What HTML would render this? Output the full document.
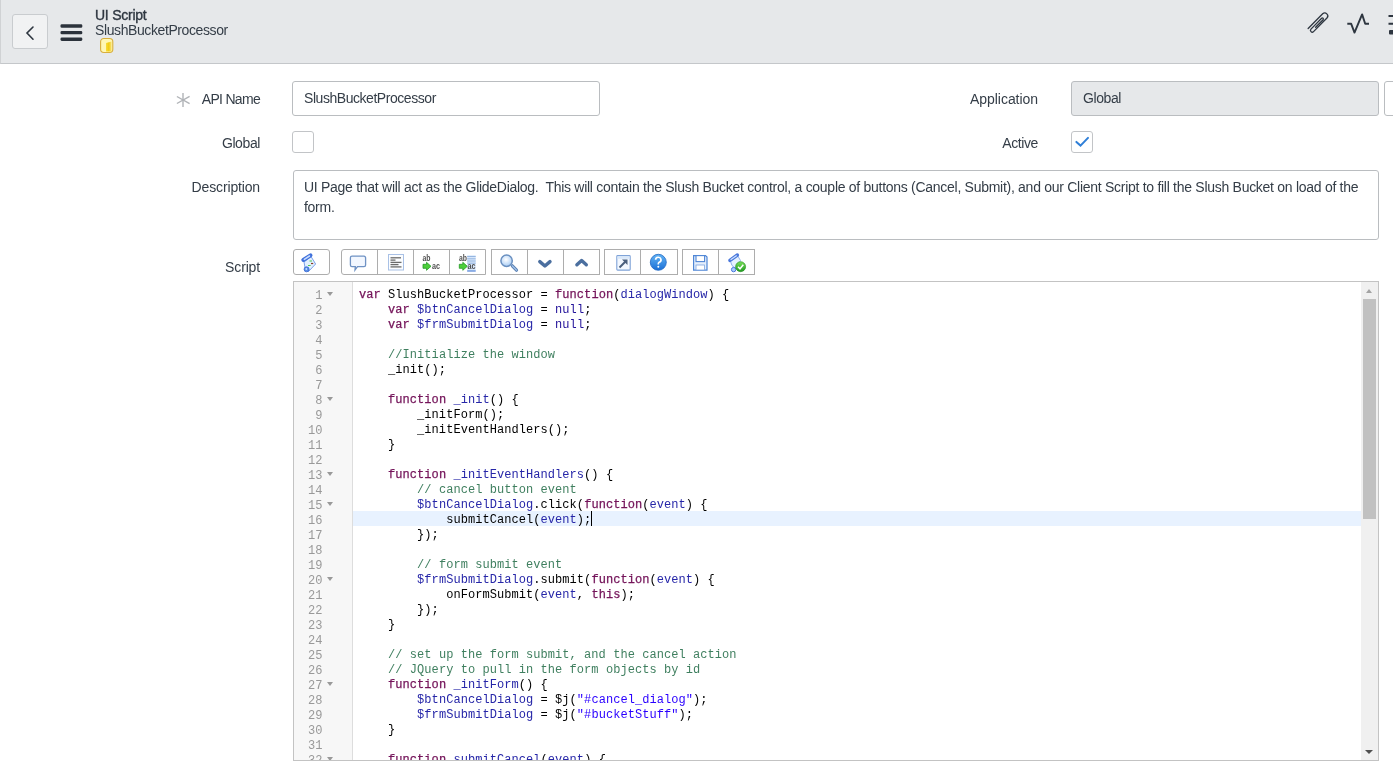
<!DOCTYPE html>
<html><head><meta charset="utf-8">
<style>
*{box-sizing:border-box;margin:0;padding:0}
html,body{width:1393px;height:768px;overflow:hidden;background:#fff;-webkit-font-smoothing:antialiased;font-family:"Liberation Sans",sans-serif;color:#343d47}
.abs{position:absolute}
#hdr{left:0;top:0;width:1393px;height:64px;background:#e6e8ea;border-bottom:1px solid #c4c7ca;border-left:1px solid #d0d2d4}
#back{left:12px;top:14px;width:36px;height:35px;background:#f1f2f3;border:1px solid #c9cccf;border-radius:3px}
.lbl{font-size:13px;color:#343d47;text-align:right;white-space:nowrap}
.inp{border:1px solid #babdc0;border-radius:3px;background:#fff;font-size:13px;color:#343d47}
.cb{border:1px solid #c2c4c7;border-radius:3px;background:#fff}
#tb .g{position:absolute;top:249px;height:26px;border:1px solid #adadad;background:#fff;display:flex}
#tb .g.r{border-radius:3px}
#tb .b{width:36px;height:24px;border-right:1px solid #adadad;position:relative}
#tb .b:last-child{border-right:none;width:auto;flex:1}
#ed{left:293px;top:281px;width:1086px;height:480px;border:1px solid #c3c3c3;background:#fff;overflow:hidden}
#gut{left:0;top:0;width:59px;height:478px;background:#f7f7f7;border-right:1px solid #dddddd}
.code{font-family:"Liberation Mono",monospace;font-size:12px;line-height:15px;white-space:pre}
#nums{left:0;top:7px;width:28.5px;text-align:right;color:#999}
#lines{left:65px;top:6px;color:#000;letter-spacing:0.06px}
.k{color:#74145a;font-weight:normal;-webkit-text-stroke:0.25px #74145a}
.v{color:#2626a8}
.c{color:#3f7f5f}
.s{color:#2a00ff}
.a{color:#221199}
#hl{left:59px;top:229px;width:1008px;height:15px;background:#e8f2ff}
#cur{left:297px;top:229px;width:1px;height:15px;background:#000}
#sb{left:1067px;top:0;width:17px;height:478px;background:#f0f0f0}
#thumb{left:2px;top:17px;width:13px;height:220px;background:#c1c1c1}
#sbup{left:5px;top:7px;width:0;height:0;border-left:3.5px solid transparent;border-right:3.5px solid transparent;border-bottom:4px solid #a3a3a3}
#sbdn{left:4px;top:468px;width:0;height:0;border-left:4px solid transparent;border-right:4px solid transparent;border-top:4px solid #505050}
.d{color:#2626a8}
.fold{left:33px;width:0;height:0;border-left:3px solid transparent;border-right:3px solid transparent;border-top:4px solid #999}
</style></head><body><div style="will-change:transform;position:absolute;left:0;top:0;width:1393px;height:768px">
<div id="hdr" class="abs"></div>
<div id="back" class="abs"><svg width="34" height="33" style="position:absolute;left:0;top:0"><path d="M20 12 L14 18 L20 24.2" fill="none" stroke="#2e3640" stroke-width="1.6" stroke-linecap="round"/></svg></div>
<svg class="abs" style="left:0;top:0" width="90" height="50"><g fill="#2b323b"><rect x="60.5" y="24.3" width="21.8" height="3.5" rx="1.3"/><rect x="60.5" y="30.9" width="21.8" height="3.4" rx="1.3"/><rect x="60.5" y="37.5" width="21.8" height="3.4" rx="1.3"/></g></svg>
<div class="abs" style="left:95px;top:7px;font-size:14px;color:#2e3640;letter-spacing:-0.25px;-webkit-text-stroke:0.35px #2e3640">UI Script</div>
<div class="abs" style="left:95px;top:22px;font-size:14px;letter-spacing:-0.4px;color:#343d47">SlushBucketProcessor</div>
<svg class="abs" style="left:96px;top:34px" width="22" height="22"><defs><linearGradient id="yg" x1="0" y1="0" x2="1" y2="0"><stop offset="0" stop-color="#f7dc3a"/><stop offset="0.5" stop-color="#f2cc10"/><stop offset="1" stop-color="#f9e47a"/></linearGradient></defs><rect x="4.6" y="4.5" width="12.2" height="14" rx="3.2" fill="#fff7b4" stroke="#d8ae3c" stroke-width="1.1"/><path d="M10 9 L15.6 7.5 V16.5 Q15.6 17.6 14.5 17.6 H10 Z" fill="url(#yg)"/></svg>

<!-- header right icons -->
<svg class="abs" style="left:1290px;top:0" width="103" height="45"><g transform="translate(-1290,0)" fill="none" stroke="#2e3640">
<path d="M1308.14 28.55 L1322.67 13.81 A3 3 0 0 1 1326.94 18.02 L1313.54 31.62 A1.8 1.8 0 0 1 1310.97 29.10 L1321.64 18.27 A1 1 0 0 1 1323.07 19.68 L1315.63 27.23" stroke-width="1.3" stroke-linecap="round"/>
<path d="M1347.3 23.8 H1351.2 L1354.5 32.6 L1362.1 14.4 L1365.2 23.8 H1369" stroke-width="1.9" stroke-linejoin="round"/>
<path d="M1388.5 16 H1394 M1388.5 23.8 H1394" stroke-width="1.9"/>
<rect x="1389" y="30" width="6" height="4.6" rx="1" fill="#2e3640" stroke="none"/>
</g></svg>
<!-- form -->
<svg class="abs" style="left:174.5px;top:92px" width="17" height="16"><g stroke="#b0b3b7" stroke-width="1.4"><line x1="8" y1="1" x2="8" y2="15"/><line x1="1.9" y1="4.5" x2="14.6" y2="11.6"/><line x1="1.9" y1="11.5" x2="14.6" y2="4.4"/></g></svg>
<div class="abs lbl" style="right:1133px;top:91px;font-size:14px;letter-spacing:-0.7px">API Name</div>
<div class="abs inp" style="left:292px;top:81px;width:308px;height:35px;padding:8px 0 0 11px;font-size:14px;letter-spacing:-0.45px">SlushBucketProcessor</div>
<div class="abs lbl" style="right:1133px;top:135px;font-size:14px;letter-spacing:-0.4px">Global</div>
<div class="abs cb" style="left:292px;top:131px;width:22px;height:22px"></div>
<div class="abs lbl" style="right:1133px;top:179px;font-size:14px;letter-spacing:-0.15px">Description</div>
<div class="abs inp" style="left:293px;top:170px;width:1086px;height:70px;padding:6px 0 0 10px;line-height:20px;letter-spacing:-0.28px;font-size:14px">UI Page that will act as the GlideDialog.&nbsp; This will contain the Slush Bucket control, a couple of buttons (Cancel, Submit), and our Client Script to fill the Slush Bucket on load of the<br>form.</div>
<div class="abs lbl" style="right:1133px;top:259px;font-size:14px;letter-spacing:-0.15px">Script</div>

<div class="abs lbl" style="right:355px;top:91px;font-size:14px;letter-spacing:-0.05px">Application</div>
<div class="abs inp" style="left:1071px;top:81px;width:308px;height:35px;padding:8px 0 0 11px;background:#e6e8ea;font-size:14px;letter-spacing:-0.4px">Global</div>
<div class="abs inp" style="left:1384px;top:81px;width:30px;height:35px"></div>
<div class="abs lbl" style="right:355px;top:135px;font-size:14px;letter-spacing:-0.4px">Active</div>
<div class="abs cb" style="left:1071px;top:131px;width:22px;height:22px"><svg width="20" height="20" style="position:absolute;left:0;top:0"><path d="M4.4 9.9 L8.5 13.6 L16 5.9" fill="none" stroke="#2f7fd8" stroke-width="2" stroke-linecap="round"/></svg></div>

<!-- toolbar -->
<div id="tb">
<div class="g r" style="left:293px;width:37px"><div class="b"></div></div>
<div class="g" style="left:341px;width:145px;border-radius:3px 0 0 3px"><div class="b"></div><div class="b"></div><div class="b"></div><div class="b"></div></div>
<div class="g" style="left:491px;width:109px"><div class="b"></div><div class="b"></div><div class="b"></div></div>
<div class="g" style="left:604px;width:74px"><div class="b"></div><div class="b"></div></div>
<div class="g" style="left:682px;width:73px"><div class="b"></div><div class="b"></div></div>
</div>

<svg class="abs" style="left:0;top:0;pointer-events:none" width="800" height="280">
<defs>
<radialGradient id="mg" cx="0.45" cy="0.4" r="0.6"><stop offset="0" stop-color="#ffffff"/><stop offset="1" stop-color="#a9cdf5"/></radialGradient>
<linearGradient id="hg" x1="0" y1="0" x2="0" y2="1"><stop offset="0" stop-color="#63b4f4"/><stop offset="1" stop-color="#1b6fd6"/></linearGradient>
<linearGradient id="gg" x1="0" y1="0" x2="0" y2="1"><stop offset="0" stop-color="#7be05a"/><stop offset="1" stop-color="#1f9a1f"/></linearGradient>
</defs>
<!-- scroll icon -->
<g>
<path d="M304 262 L311 256.5 L315.6 264 L308.5 271.5 L305 267.5 Z" fill="#e2f0ff" stroke="#7aa0e8" stroke-width="1"/>
<line x1="303.3" y1="260" x2="310.5" y2="255.3" stroke="#3f70dc" stroke-width="4" stroke-linecap="round"/>
<line x1="304.3" y1="259.4" x2="309.5" y2="256" stroke="#c9ddff" stroke-width="1.5" stroke-linecap="round"/>
<circle cx="306.6" cy="269.3" r="2.5" fill="#5b8fe8" stroke="#3466d0" stroke-width="0.8"/>
<circle cx="306.3" cy="269" r="0.9" fill="#c0e0ff"/>
<line x1="309.5" y1="261" x2="312" y2="261" stroke="#52c852" stroke-width="1"/>
<line x1="311" y1="263.5" x2="313.2" y2="263.5" stroke="#8a3a20" stroke-width="1.2"/>
<line x1="308" y1="265.5" x2="310.6" y2="265.5" stroke="#52c852" stroke-width="1"/>
</g>
<!-- comment bubble -->
<path d="M352 256.2 H364 a1.6 1.6 0 0 1 1.6 1.6 V265 a1.6 1.6 0 0 1 -1.6 1.6 H357.5 L355 270 L355.3 266.6 H352 a1.6 1.6 0 0 1 -1.6 -1.6 V257.8 a1.6 1.6 0 0 1 1.6 -1.6 Z" fill="#f2f7ff" stroke="#6f92c4" stroke-width="1.3"/>
<!-- format icon -->
<rect x="388.5" y="254.5" width="15" height="15.5" fill="#fbfdff" stroke="#a9c1e6" stroke-width="1"/>
<g stroke="#6b6b6b" stroke-width="1.3">
<line x1="390.5" y1="257.8" x2="401" y2="257.8"/><line x1="390.5" y1="260.1" x2="395.5" y2="260.1"/><line x1="390.5" y1="262.4" x2="401.5" y2="262.4"/><line x1="390.5" y1="264.6" x2="398.5" y2="264.6"/><line x1="390.5" y1="266.9" x2="401.5" y2="266.9"/>
</g>
<!-- replace icon -->
<text x="422.5" y="260.5" font-family="Liberation Sans" font-size="8.5" font-weight="bold" fill="#505050" textLength="8" lengthAdjust="spacingAndGlyphs">ab</text>
<path d="M423 264.3 H426.5 V262.3 L431 266.3 L426.5 270.3 V268.3 H423 Z" fill="#4ccf3a" stroke="#249a24" stroke-width="0.8"/>
<text x="432" y="268.8" font-family="Liberation Sans" font-size="8.5" font-weight="bold" fill="#505050" textLength="8" lengthAdjust="spacingAndGlyphs">ac</text>
<!-- replace all icon -->
<rect x="467.2" y="255.3" width="8.5" height="16" fill="#d7e7fb"/>
<g stroke="#8fb0dd" stroke-width="0.9"><line x1="467.2" y1="256.5" x2="475.7" y2="256.5"/><line x1="467.2" y1="258.8" x2="475.7" y2="258.8"/><line x1="467.2" y1="261" x2="475.7" y2="261"/><line x1="467.2" y1="263.2" x2="475.7" y2="263.2"/></g>
<line x1="467.2" y1="271" x2="475.7" y2="271" stroke="#3a70d0" stroke-width="1"/>
<text x="459" y="260.5" font-family="Liberation Sans" font-size="8.5" font-weight="bold" fill="#505050" textLength="8" lengthAdjust="spacingAndGlyphs">ab</text>
<path d="M459.3 264.3 H462.8 V262.3 L467.3 266.3 L462.8 270.3 V268.3 H459.3 Z" fill="#4ccf3a" stroke="#249a24" stroke-width="0.8"/>
<text x="467.5" y="269" font-family="Liberation Sans" font-size="8.5" font-weight="bold" fill="#505050" textLength="8" lengthAdjust="spacingAndGlyphs">ac</text>
<!-- magnifier -->
<line x1="512.3" y1="265.8" x2="516.5" y2="270.2" stroke="#5b82b4" stroke-width="3.2" stroke-linecap="round"/>
<line x1="512.3" y1="265.8" x2="516.5" y2="270.2" stroke="#a9c8ee" stroke-width="1.2" stroke-linecap="round"/>
<circle cx="506.6" cy="260.7" r="5.7" fill="url(#mg)" stroke="#6a90c0" stroke-width="1.5"/>
<!-- chevrons -->
<path d="M539.8 261.6 L544.9 266 L550 261.6" fill="none" stroke="#4b6f9f" stroke-width="3.4" stroke-linecap="round" stroke-linejoin="round"/>
<path d="M576.9 264.8 L581.6 260.5 L586.3 264.8" fill="none" stroke="#4b6f9f" stroke-width="3.4" stroke-linecap="round" stroke-linejoin="round"/>
<!-- fullscreen -->
<rect x="616.8" y="255.6" width="13.4" height="14.5" rx="0.8" fill="#f3f8ff" stroke="#7fa3d8" stroke-width="1.1"/><rect x="617.5" y="256.3" width="12" height="2.5" fill="#d9e8fa"/>
<path d="M619.5 267.5 L626 261" stroke="#4a5f7d" stroke-width="2"/>
<path d="M622 259.5 H627.5 V265 Z" fill="#4a5f7d"/>
<!-- help -->
<circle cx="658.3" cy="262.3" r="8" fill="url(#hg)" stroke="#1d66c4" stroke-width="0.8"/>
<path d="M655.6 259.8 a2.7 2.6 0 1 1 3.6 2.5 q-0.9 0.4 -0.9 1.6 v0.6" fill="none" stroke="#fff" stroke-width="1.7"/>
<circle cx="658.3" cy="266.8" r="1" fill="#fff"/>
<!-- save -->
<path d="M693.6 255.6 H705.5 L707 257 V270.1 H693.6 Z" fill="#e5effc" stroke="#4f86d6" stroke-width="1.2"/>
<rect x="696" y="255.6" width="8.6" height="6" fill="#ffffff" stroke="#4f86d6" stroke-width="1.1"/>
<rect x="696" y="265" width="8.6" height="5" fill="#ffffff" stroke="#7aa4e0" stroke-width="0.8"/>
<!-- script check -->
<path d="M730.5 261.5 L737.5 255.5 L740.5 260.5 L735.5 268.5 L732 265.5 Z" fill="#e6f2ff" stroke="#86a8ea" stroke-width="0.9"/>
<line x1="729.9" y1="260.4" x2="737.4" y2="255" stroke="#4a78dc" stroke-width="3.4" stroke-linecap="round"/>
<line x1="731" y1="259.6" x2="736.4" y2="255.8" stroke="#cfe2ff" stroke-width="1.2" stroke-linecap="round"/>
<circle cx="733.6" cy="269.6" r="2.2" fill="#a9ccff" stroke="#4a78dc" stroke-width="1"/>
<circle cx="740.6" cy="266.7" r="5" fill="url(#gg)" stroke="#1c8a1c" stroke-width="0.6"/>
<path d="M738 266.8 L740 268.8 L743.3 264.8" fill="none" stroke="#fff" stroke-width="1.5"/>
</svg>
<!-- editor -->
<div id="ed" class="abs">
<div id="gut" class="abs"></div>
<!--CODE-->
<div id="nums" class="abs code">1
2
3
4
5
6
7
8
9
10
11
12
13
14
15
16
17
18
19
20
21
22
23
24
25
26
27
28
29
30
31
32</div>
<div class="abs fold" style="top:10px"></div><div class="abs fold" style="top:115px"></div><div class="abs fold" style="top:190px"></div><div class="abs fold" style="top:220px"></div><div class="abs fold" style="top:295px"></div><div class="abs fold" style="top:400px"></div><div class="abs fold" style="top:475px"></div>
<div id="hl" class="abs"></div>
<div id="lines" class="abs code"><span class="k">var</span> SlushBucketProcessor = <span class="k">function</span>(<span class="v">dialogWindow</span>) {
    <span class="k">var</span> <span class="v">$btnCancelDialog</span> = <span class="a">null</span>;
    <span class="k">var</span> <span class="v">$frmSubmitDialog</span> = <span class="a">null</span>;

    <span class="c">//Initialize the window</span>
    _init();

    <span class="k">function</span> <span class="d">_init</span>() {
        _initForm();
        _initEventHandlers();
    }

    <span class="k">function</span> <span class="d">_initEventHandlers</span>() {
        <span class="c">// cancel button event</span>
        <span class="v">$btnCancelDialog</span>.click(<span class="k">function</span>(<span class="v">event</span>) {
            submitCancel(<span class="v">event</span>);
        });

        <span class="c">// form submit event</span>
        <span class="v">$frmSubmitDialog</span>.submit(<span class="k">function</span>(<span class="v">event</span>) {
            onFormSubmit(<span class="v">event</span>, <span class="k">this</span>);
        });
    }

    <span class="c">// set up the form submit, and the cancel action</span>
    <span class="c">// JQuery to pull in the form objects by id</span>
    <span class="k">function</span> <span class="d">_initForm</span>() {
        <span class="v">$btnCancelDialog</span> = $j(<span class="s">"#cancel_dialog"</span>);
        <span class="v">$frmSubmitDialog</span> = $j(<span class="s">"#bucketStuff"</span>);
    }

    <span class="k">function</span> <span class="d">submitCancel</span>(<span class="v">event</span>) {</div>
<div id="cur" class="abs"></div>
<div id="sb" class="abs"><div id="sbup" class="abs"></div><div id="thumb" class="abs"></div><div id="sbdn" class="abs"></div></div>
<!--/CODE-->
</div>
</div></body></html>
